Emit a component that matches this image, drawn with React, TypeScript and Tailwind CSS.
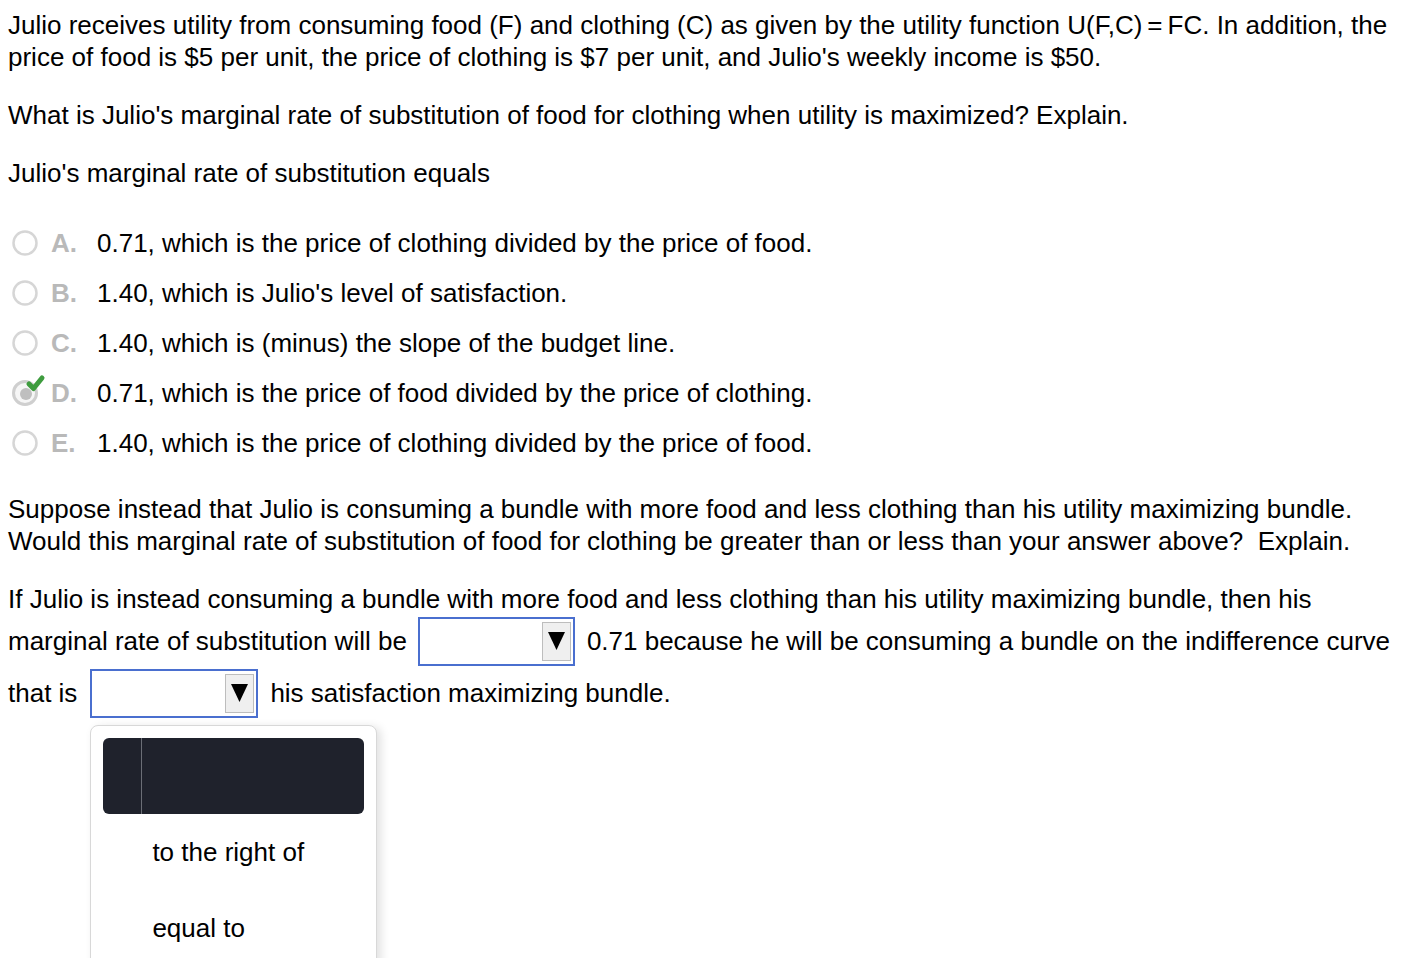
import React from 'react';

const options = [
  { letter: 'A.', text: '0.71, which is the price of clothing divided by the price of food.' },
  { letter: 'B.', text: "1.40, which is Julio's level of satisfaction." },
  { letter: 'C.', text: '1.40, which is (minus) the slope of the budget line.' },
  { letter: 'D.', text: '0.71, which is the price of food divided by the price of clothing.', checked: true },
  { letter: 'E.', text: '1.40, which is the price of clothing divided by the price of food.' },
];

const Radio: React.FC<{ checked?: boolean }> = ({ checked }) => (
  <svg width="50" height="34" viewBox="0 0 50 34" className="shrink-0 overflow-visible">
    {!checked && <circle cx="25" cy="17" r="11.5" fill="#fff" stroke="#d6d6d6" strokeWidth="2.5" />}
    {checked && (
      <>
        <circle cx="25" cy="17" r="11.5" fill="#f6f6f6" stroke="#cfcfcf" strokeWidth="3" />
        <circle cx="26" cy="18" r="6" fill="#bfbfbf" />
        <path d="M29 8 L33.5 12.5 L42 2" fill="none" stroke="#3e9c3e" strokeWidth="5" strokeLinecap="round" strokeLinejoin="round" />
      </>
    )}
  </svg>
);

const SelectBox: React.FC<{ width: string }> = ({ width }) => (
  <div className={`${width} h-[49px] border-2 border-[#4a6fcf] bg-white flex items-center justify-end pr-[2px] shrink-0`}>
    <div className="w-[29px] h-[39px] bg-[#efefef] border border-[#bdbdbd] flex items-center justify-center">
      <svg width="17" height="20" viewBox="0 0 17 20">
        <path d="M0 1 L17 1 L8.5 19 Z" fill="#000" />
      </svg>
    </div>
  </div>
);

export default function App() {
  return (
    <div className="bg-white text-black text-[26px] leading-[32px] px-2 pt-[9px] min-h-[958px] overflow-hidden relative" style={{ fontFamily: '"Liberation Sans", Arial, sans-serif' }}>
      <p className="whitespace-nowrap">
        Julio receives utility from consuming food (F) and clothing (C) as given by the utility function U(F,C)<span className="px-[5px]">=</span>FC. In addition, the
        <br />
        price of food is $5 per unit, the price of clothing is $7 per unit, and Julio's weekly income is $50.
      </p>

      <p className="mt-[26px]">What is Julio's marginal rate of substitution of food for clothing when utility is maximized? Explain.</p>

      <p className="mt-[26px]">Julio's marginal rate of substitution equals</p>

      <div className="mt-[29px] flex flex-col -ml-2">
        {options.map((o) => (
          <div key={o.letter} className="h-[50px] flex items-center">
            <div className="w-[51px] flex items-center">
              <Radio checked={o.checked} />
            </div>
            <span className="w-[46px] text-[#b9b9b9] font-bold">{o.letter}</span>
            <span>{o.text}</span>
          </div>
        ))}
      </div>

      <p className="mt-[25px] whitespace-nowrap">
        Suppose instead that Julio is consuming a bundle with more food and less clothing than his utility maximizing bundle.
        <br />
        Would this marginal rate of substitution of food for clothing be greater than or less than your answer above?&nbsp; Explain.
      </p>

      <div className="mt-[26px]">
        <p className="whitespace-nowrap">If Julio is instead consuming a bundle with more food and less clothing than his utility maximizing bundle, then his</p>
        <div className="h-[52px] flex items-center whitespace-nowrap">
          <span>marginal rate of substitution will be</span>
          <span className="ml-[11px]"><SelectBox width="w-[157px]" /></span>
          <span className="ml-[12px]">0.71 because he will be consuming a bundle on the indifference curve</span>
        </div>
        <div className="h-[52px] flex items-center whitespace-nowrap">
          <span>that is</span>
          <div className="ml-[13px] relative">
            <SelectBox width="w-[168px]" />
            <div className="absolute left-0 top-[56px] w-[287px] h-[260px] bg-white border border-[#d8d8d8] rounded-t-[8px] shadow-[4px_2px_10px_rgba(0,0,0,0.12)] pt-[12px] px-[12px] z-10">
              <div className="h-[76px] bg-[#1f222c] rounded-[6px] flex">
                <div className="w-[39px] border-r border-[#6b6e76]" />
              </div>
              <div className="h-[76px] flex items-center pl-[49px]">to the right of</div>
              <div className="h-[76px] flex items-center pl-[49px]">equal to</div>
            </div>
          </div>
          <span className="ml-[12px]">his satisfaction maximizing bundle.</span>
        </div>
      </div>
    </div>
  );
}
